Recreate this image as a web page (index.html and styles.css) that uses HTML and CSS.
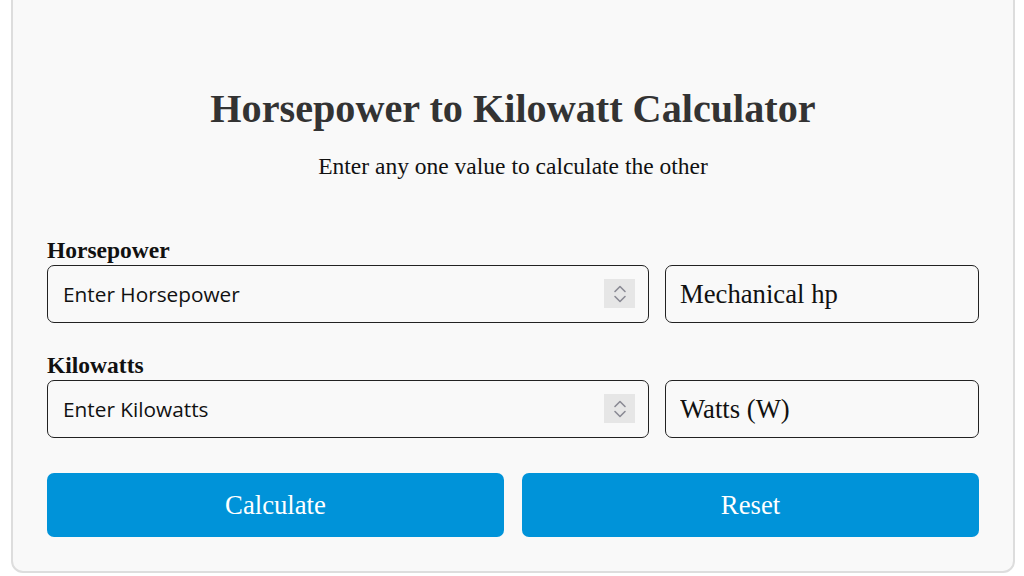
FILE: index.html
```html
<!DOCTYPE html>
<html>
<head>
    <title>Horsepower to Kilowatt Calculator</title>
    <link rel="stylesheet" href="styles.css">
</head>
<body>

<div class="calculator">
    <h1>Horsepower to Kilowatt Calculator</h1>
    <p class="subtitle">Enter any one value to calculate the other</p>

    <div class="field">
        <label for="hp">Horsepower</label>
        <div class="field-row">
            <div class="number-wrap">
                <input type="number" id="hp" placeholder="Enter Horsepower">
                <span class="spinner">
                    <svg width="16" height="22" viewBox="0 0 16 22"><path d="M3 8.5 L8 3.5 L13 8.5 M3 13.5 L8 18.5 L13 13.5" fill="none" stroke="#8a8a94" stroke-width="1.6" stroke-linecap="round" stroke-linejoin="round"/></svg>
                </span>
            </div>
            <select id="hpType">
                <option>Mechanical hp</option>
                <option>Metric hp</option>
                <option>Electrical hp</option>
            </select>
        </div>
    </div>

    <div class="field">
        <label for="kw">Kilowatts</label>
        <div class="field-row">
            <div class="number-wrap">
                <input type="number" id="kw" placeholder="Enter Kilowatts">
                <span class="spinner">
                    <svg width="16" height="22" viewBox="0 0 16 22"><path d="M3 8.5 L8 3.5 L13 8.5 M3 13.5 L8 18.5 L13 13.5" fill="none" stroke="#8a8a94" stroke-width="1.6" stroke-linecap="round" stroke-linejoin="round"/></svg>
                </span>
            </div>
            <select id="kwUnit">
                <option>Watts (W)</option>
                <option>Kilowatts (kW)</option>
            </select>
        </div>
    </div>

    <div class="buttons">
        <button id="calculate">Calculate</button>
        <button id="reset">Reset</button>
    </div>
</div>

</body>
</html>
```

FILE: styles.css
```css
* { margin: 0; padding: 0; box-sizing: border-box; }

body {
    font-family: "Liberation Serif", "Times New Roman", serif;
    background: #fff;
    overflow: hidden;
}

/* Main card */
.calculator {
    width: 1004px;
    margin: -20px 0 0 11px;
    padding: 105px 34px 34px;
    background: #f9f9f9;
    border: 2px solid #ddd;
    border-radius: 12px;
    display: flex;
    flex-direction: column;
}

h1 {
    font-size: 40.2px;
    font-weight: bold;
    color: #333;
    text-align: center;
    line-height: 44px;
}

.subtitle {
    font-size: 23.5px;
    color: #111;
    text-align: center;
    margin-top: 22px;
    line-height: 27px;
}

.field {
    display: flex;
    flex-direction: column;
    gap: 2px;
    margin-top: 57px;
}

.field + .field {
    margin-top: 29px;
}

label {
    font-size: 23.5px;
    font-weight: bold;
    color: #111;
    line-height: 26px;
}

.field-row {
    display: flex;
    gap: 16px;
}

.number-wrap {
    flex: 0 0 602px;
    position: relative;
}

input[type="number"] {
    width: 100%;
    height: 58px;
    padding: 0 15px;
    border: 1px solid #222;
    border-radius: 7px;
    background: #f9f9f9;
    font-family: "Open Sans", "Noto Sans", sans-serif;
    font-size: 20.8px;
    color: #111;
    -moz-appearance: textfield;
}

input[type="number"]::placeholder {
    color: #111;
}

input[type="number"]::-webkit-inner-spin-button,
input[type="number"]::-webkit-outer-spin-button {
    -webkit-appearance: none;
    margin: 0;
}

/* spin buttons drawn over the input */
.spinner {
    position: absolute;
    right: 14px;
    top: 14px;
    width: 31px;
    height: 29px;
    background: #e6e6e6;
    display: flex;
    align-items: center;
    justify-content: center;
    pointer-events: none;
}

select {
    flex: 1;
    height: 58px;
    padding: 0 14px;
    border: 1px solid #222;
    border-radius: 7px;
    background: #f9f9f9;
    font-family: "Liberation Serif", "Times New Roman", serif;
    font-size: 26.7px;
    color: #111;
    -webkit-appearance: none;
    appearance: none;
}

.buttons {
    display: flex;
    gap: 18px;
    margin-top: 35px;
}

button {
    flex: 1;
    height: 64px;
    background: #0093d9;
    color: #fff;
    border: none;
    border-radius: 7px;
    font-family: "Liberation Serif", "Times New Roman", serif;
    font-size: 26.7px;
    cursor: pointer;
}

button:hover {
    background: #0080c0;
}
```
